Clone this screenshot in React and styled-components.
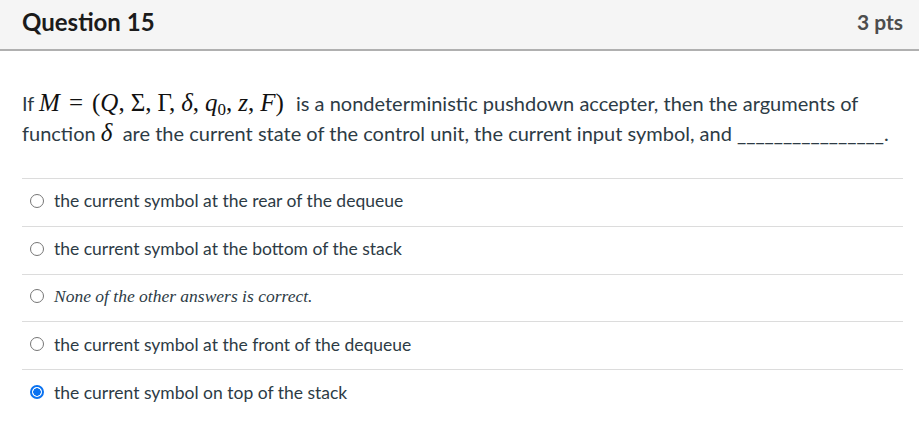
import React from 'react';
import styled, { createGlobalStyle } from 'styled-components';

const Global = createGlobalStyle`
	body {
		margin: 0;
		background: #fff;
		font-family: Lato, 'Liberation Sans', sans-serif;
		color: #2d3b45;
	}
`;

const answers = [
	{ text: 'the current symbol at the rear of the dequeue' },
	{ text: 'the current symbol at the bottom of the stack' },
	{ text: 'None of the other answers is correct.', serif: true },
	{ text: 'the current symbol at the front of the dequeue' },
	{ text: 'the current symbol on top of the stack', checked: true },
];

const App = () => {
	return (
		<>
			<Global />
			<Page>
				<Header>
					<Title>Question 15</Title>
					<Points>3 pts</Points>
				</Header>
				<Body>
					<QuestionText>
						If{' '}
						<Math>
							<I>M</I>
							<Op>=</Op>(<I>Q</I>,<Sp />Σ,<Sp />Γ,<Sp />
							<I>δ</I>,<Sp />
							<I>q</I>
							<Sub>0</Sub>,<Sp />
							<I>z</I>,<Sp />
							<I>F</I>)
						</Math>
						<Gap /> is a nondeterministic pushdown accepter, then the arguments of
						<br />
						function <Math><I>δ</I></Math>&nbsp; are the current state of the
						control unit, the current input symbol, and ________________.
					</QuestionText>
					<Answers>
						{answers.map((a) => (
							<Answer key={a.text}>
								<Radio checked={a.checked} />
								<AnswerText serif={a.serif}>{a.text}</AnswerText>
							</Answer>
						))}
					</Answers>
				</Body>
			</Page>
		</>
	);
};

export default App;

/* Styles --- */

const Page = styled.div`
	width: 919px;
	height: 426px;
	overflow: hidden;
`;

const Header = styled.div`
	display: flex;
	justify-content: space-between;
	align-items: center;
	height: 49px;
	padding: 0 16px 0 22px;
	background: #f5f5f5;
	border-bottom: 2px solid #b0b0b0;
`;

const Title = styled.div`
	font-size: 24px;
	font-weight: 700;
	color: #1b1b1b;
	padding-bottom: 6px;
`;

const Points = styled.div`
	font-size: 21px;
	font-weight: 700;
	color: #4d4d4d;
	padding-bottom: 6px;
`;

const Body = styled.div`
	padding: 37px 16px 0 22px;
`;

const QuestionText = styled.div`
	font-size: 20px;
	line-height: 30px;
	color: #2d3b45;
`;

const Math = styled.span`
	font-family: 'Liberation Serif', 'DejaVu Serif', serif;
	font-size: 25px;
	line-height: 1;
	color: #111;
	white-space: nowrap;
`;

const I = styled.i`
	font-style: italic;
`;

const Op = styled.span`
	margin: 0 9px;
`;

const Sp = styled.span`
	display: inline-block;
	width: 6px;
`;

const Gap = styled.span`
	display: inline-block;
	width: 7px;
`;

const Sub = styled.sub`
	font-size: 17px;
	line-height: 1;
	vertical-align: -4px;
`;

const Answers = styled.div`
	margin-top: 30px;
	border-top: 1px solid #dcdcdc;
`;

const Answer = styled.div`
	box-sizing: border-box;
	display: flex;
	align-items: center;
	gap: 10px;
	height: 47.75px;
	padding: 0 0 3px 8px;
	border-bottom: 1px solid #dcdcdc;
	&:last-child {
		border-bottom: none;
	}
`;

const Radio = styled.span`
	box-sizing: border-box;
	width: 14px;
	height: 14px;
	border-radius: 50%;
	border: ${(p) => (p.checked ? '2px solid #0a72f0' : '1px solid #767676')};
	background: ${(p) => (p.checked ? 'radial-gradient(circle, #0a72f0 0 3.5px, #fff 4px)' : '#fff')};
`;

const AnswerText = styled.span`
	font-family: ${(p) => (p.serif ? "'Liberation Serif', serif" : 'Lato, sans-serif')};
	font-style: ${(p) => (p.serif ? 'italic' : 'normal')};
	font-size: 17.5px;
	color: #2d3b45;
`;
